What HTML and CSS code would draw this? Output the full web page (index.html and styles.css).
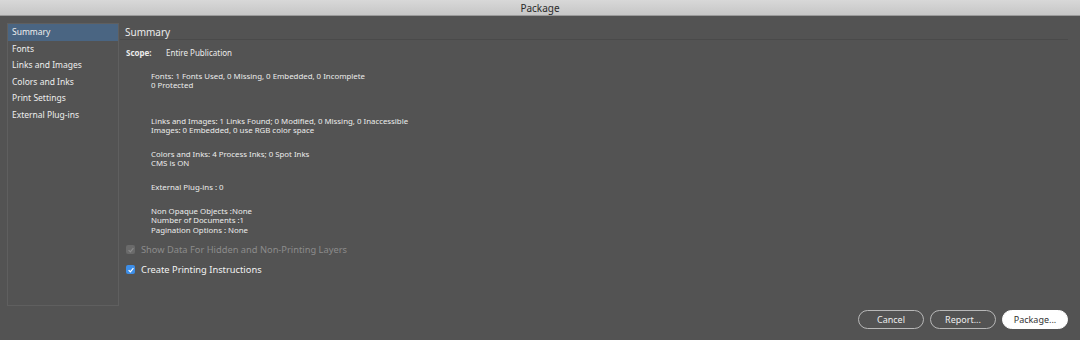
FILE: index.html
```html
<!DOCTYPE html>
<html>
<head>
<meta charset="utf-8">
<link rel="stylesheet" href="styles.css">
</head>
<body>
<div class="window">
  <div class="titlebar">Package</div>
  <div class="body">
    <div class="sidebar">
      <div class="nav-item selected">Summary</div>
      <div class="nav-item">Fonts</div>
      <div class="nav-item">Links and Images</div>
      <div class="nav-item">Colors and Inks</div>
      <div class="nav-item">Print Settings</div>
      <div class="nav-item">External Plug-ins</div>
    </div>
    <div class="main">
      <div class="heading">Summary</div>
      <div class="scope"><span class="scope-label">Scope:</span><span>Entire Publication</span></div>
      <div class="info">
        <div class="block b-fonts">Fonts: 1 Fonts Used, 0 Missing, 0 Embedded, 0 Incomplete<br>0 Protected</div>
        <div class="block b-links">Links and Images: 1 Links Found; 0 Modified, 0 Missing, 0 Inaccessible<br>Images: 0 Embedded, 0 use RGB color space</div>
        <div class="block b-colors">Colors and Inks: 4 Process Inks; 0 Spot Inks<br>CMS is ON</div>
        <div class="block b-ext">External Plug-ins : 0</div>
        <div class="block b-misc">Non Opaque Objects :None<br>Number of Documents :1<br>Pagination Options : None</div>
      </div>
      <div class="check disabled"><span class="box"><svg viewBox="0 0 10 10" width="8" height="8"><path d="M2 5.2 L4.2 7.4 L8 2.6" fill="none" stroke="#8a8a8a" stroke-width="1.5"/></svg></span><span>Show Data For Hidden and Non-Printing Layers</span></div>
      <div class="check enabled"><span class="box"><svg viewBox="0 0 10 10" width="8" height="8"><path d="M2 5.2 L4.2 7.4 L8 2.6" fill="none" stroke="#ffffff" stroke-width="1.5"/></svg></span><span>Create Printing Instructions</span></div>
    </div>
  </div>
  <div class="footer">
    <button class="btn">Cancel</button>
    <button class="btn">Report...</button>
    <button class="btn primary">Package...</button>
  </div>
</div>
</body>
</html>
```
FILE: styles.css
```css
html, body {
  margin: 0;
  padding: 0;
  background: #535353;
}
.window {
  width: 1080px;
  height: 340px;
  display: flex;
  flex-direction: column;
  font-family: "Noto Sans", "DejaVu Sans", sans-serif;
  color: #ececec;
  background: #535353;
}
.titlebar {
  height: 16px;
  line-height: 16px;
  text-align: center;
  font-size: 10px;
  color: #2a2a2a;
  background: linear-gradient(#d8d8d8, #c6c6c6);
  border-bottom: 1px solid #9a9a9a;
  box-sizing: border-box;
}
.body {
  display: flex;
  padding: 7px 12px 0 7px;
  height: 284px;
}
.sidebar {
  width: 112px;
  height: 283px;
  box-sizing: border-box;
  border: 1px solid #5f5f5f;
  padding: 0;
}
.nav-item {
  height: 16.5px;
  line-height: 16px;
  font-size: 8.5px;
  padding-left: 4px;
  color: #eeeeee;
}
.nav-item.selected {
  background: #4a6582;
}
.main {
  flex: 1;
  padding-left: 1px;
}
.heading {
  font-size: 10px;
  height: 16px;
  line-height: 18px;
  padding-left: 5px;
  border-bottom: 1px solid #4a4a4a;
}
.scope {
  font-size: 8px;
  padding-left: 6px;
  margin-top: 7px;
  height: 12px;
  line-height: 12px;
  display: flex;
}
.scope-label {
  font-weight: bold;
  width: 40px;
}
.info {
  padding-left: 31px;
  font-size: 7.85px;
  line-height: 9.3px;
}
.b-fonts { margin-top: 13px; }
.b-links { margin-top: 26px; }
.b-colors { margin-top: 15px; }
.b-ext { margin-top: 14px; }
.b-misc { margin-top: 15px; }
.check {
  display: flex;
  align-items: center;
  padding-left: 6px;
  gap: 6px;
}
.check.disabled {
  margin-top: 9px;
  font-size: 9.3px;
  color: #8c8c8c;
  height: 12px;
}
.check.enabled {
  margin-top: 8px;
  font-size: 9.3px;
  color: #f2f2f2;
  height: 12px;
}
.box {
  width: 9px;
  height: 9px;
  border-radius: 2px;
  display: flex;
  align-items: center;
  justify-content: center;
}
.disabled .box { background: #6a6a6a; }
.enabled .box { background: #3d8ee8; }
.footer {
  display: flex;
  justify-content: flex-end;
  gap: 6px;
  padding: 0 12px 0 0;
  margin-top: 3px;
}
.btn {
  width: 66px;
  height: 19px;
  border-radius: 10px;
  border: 1px solid #b8b8b8;
  background: transparent;
  color: #eeeeee;
  font-family: "Noto Sans", "DejaVu Sans", sans-serif;
  font-size: 9px;
  padding: 0;
}
.btn.primary {
  background: #ffffff;
  border-color: #ffffff;
  color: #333333;
}
```
